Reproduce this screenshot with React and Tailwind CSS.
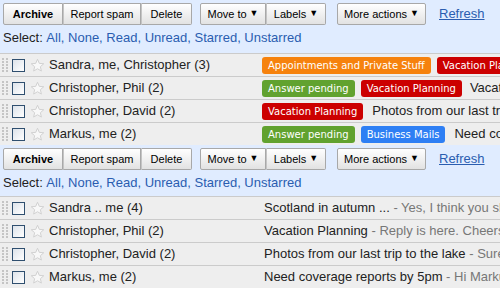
import React from 'react'

const labelColors = {
  orange: 'bg-[#f6820d]',
  red: 'bg-[#cc0000]',
  green: 'bg-[#61a22f]',
  blue: 'bg-[#2e7ff4]',
}

const Label = ({ color, children }) => (
  <span
    className={`mr-[6px] inline-flex h-[17px] shrink-0 items-center rounded-[3px] px-[6px] font-['DejaVu_Sans',Verdana,sans-serif] text-[10px] text-white ${labelColors[color]}`}
  >
    {children}
  </span>
)

const Btn = ({ children, w, bold, first, last }) => (
  <div
    className={`flex h-[22px] items-center justify-center border border-[#a8a8a8] bg-gradient-to-b from-white to-[#e2e2e2] text-[11px] text-black ${w} ${bold ? 'font-bold' : ''} ${first ? 'rounded-l-[2px]' : 'border-l-[#c4c4c4]'} ${last ? 'rounded-r-[2px]' : ''}`}
  >
    {children}
  </div>
)

const Arrow = () => <span className="ml-[3px] text-[9px]">▼</span>

const Toolbar = ({ h }) => (
  <div className={`flex flex-col bg-[#e0ecff] pl-[3px] pt-[3px] ${h}`}>
    <div className="flex items-center">
      <Btn w="w-[60px]" bold first>Archive</Btn>
      <Btn w="w-[78px]">Report spam</Btn>
      <Btn w="w-[51px]" last>Delete</Btn>
      <div className="w-[8px]" />
      <Btn w="w-[66px]" first>Move to<Arrow /></Btn>
      <Btn w="w-[60px]" last>Labels<Arrow /></Btn>
      <div className="w-[11px]" />
      <Btn w="w-[89px]" first last>More actions<Arrow /></Btn>
      <a className="ml-[13px] text-[13px] text-[#2a5db0] underline">Refresh</a>
    </div>
    <div className="mt-[5px] flex h-[16px] items-center text-[13px] text-[#222]">
      Select:&nbsp;
      <span className="text-[#2a5db0]">All, None, Read, Unread, Starred, Unstarred</span>
    </div>
  </div>
)

const Grip = () => (
  <svg width="6" height="14" className="ml-[2px] shrink-0">
    {[0, 3, 6, 9, 12].map((y) => (
      <g key={y} fill="#c4c4c4">
        <rect x="0" y={y} width="2" height="2" />
        <rect x="4" y={y} width="2" height="2" />
      </g>
    ))}
  </svg>
)

const Check = () => (
  <div className="ml-[4px] h-[13px] w-[13px] shrink-0 border border-[#2f4f6f] bg-gradient-to-br from-[#dde3ea] to-white" />
)

const Star = () => (
  <svg width="15" height="15" viewBox="0 0 24 24" className="ml-[5px] shrink-0">
    <path
      d="M12 2l2.9 6.6 7.1.6-5.4 4.7 1.6 7-6.2-3.7-6.2 3.7 1.6-7L2 9.2l7.1-.6z"
      fill="#f8f8f8"
      stroke="#cfcfcf"
      strokeWidth="1.5"
      strokeLinejoin="round"
    />
  </svg>
)

const Row = ({ name, children }) => (
  <div className="flex h-[23px] items-center overflow-hidden whitespace-nowrap border-t border-[#cbcbcb] bg-[#eeeeee] text-[13px] text-[#222]">
    <Grip />
    <Check />
    <Star />
    <div className="ml-[4px] w-[213px] shrink-0">{name}</div>
    <div className="flex items-center">{children}</div>
  </div>
)

const Snip = ({ s, t }) => (
  <span className="pl-[2px]">
    {s} <span className="text-[#777]">- {t}</span>
  </span>
)

export default function App() {
  return (
    <div className="h-[290px] w-[500px] overflow-hidden bg-white font-['Liberation_Sans',Arial,sans-serif]">
      <Toolbar h="h-[53px]" />
      <Row name="Sandra, me, Christopher (3)">
        <Label color="orange">Appointments and Private Stuff</Label>
        <Label color="red">Vacation Planning</Label>
      </Row>
      <Row name="Christopher, Phil (2)">
        <Label color="green">Answer pending</Label>
        <Label color="red">Vacation Planning</Label>
        <span className="ml-[2px]">Vacation Planning</span>
      </Row>
      <Row name="Christopher, David (2)">
        <Label color="red">Vacation Planning</Label>
        <span className="ml-[3px]">Photos from our last trip to the lake</span>
      </Row>
      <Row name="Markus, me (2)">
        <Label color="green">Answer pending</Label>
        <Label color="blue">Business Mails</Label>
        <span className="ml-[3px]">Need coverage reports by 5pm</span>
      </Row>
      <Toolbar h="h-[51px]" />
      <Row name="Sandra .. me (4)">
        <Snip s="Scotland in autumn ..." t="Yes, I think you should go" />
      </Row>
      <Row name="Christopher, Phil (2)">
        <Snip s="Vacation Planning" t="Reply is here. Cheers" />
      </Row>
      <Row name="Christopher, David (2)">
        <Snip s="Photos from our last trip to the lake" t="Sure" />
      </Row>
      <Row name="Markus, me (2)">
        <Snip s="Need coverage reports by 5pm" t="Hi Markus" />
      </Row>
    </div>
  )
}
